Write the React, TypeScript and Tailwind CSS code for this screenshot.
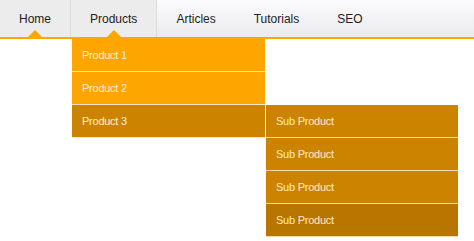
import React from 'react';

const navItems = [
  { label: 'Home', active: true },
  { label: 'Products', active: true, open: true },
  { label: 'Articles' },
  { label: 'Tutorials' },
  { label: 'SEO' },
];

const products = [
  { label: 'Product 1' },
  { label: 'Product 2' },
  { label: 'Product 3', hover: true },
];

const subProducts = ['Sub Product', 'Sub Product', 'Sub Product', 'Sub Product'];

function Dropdown() {
  return (
    <ul className="absolute left-px top-[39px] z-10 w-[193px]">
      {products.map((p) => (
        <li
          key={p.label}
          className={`relative flex h-[33px] items-center border-b border-[#fbe6c0] pl-[10px] text-[11px] tracking-[-0.25px] text-[#ffefd2] ${
            p.hover ? 'bg-[#cc8400]' : 'bg-[#ffa500]'
          }`}
        >
          {p.label}
          {p.hover && (
            <ul className="absolute left-full top-0 ml-px w-[192px]">
              {subProducts.map((s, i) => (
                <li
                  key={i}
                  className={`flex h-[33px] items-center border-b border-[#f5dcae] pl-[10px] text-[11px] tracking-[-0.25px] text-[#ffeac2] ${
                    i === subProducts.length - 1 ? 'bg-[#b87500]' : 'bg-[#cc8400]'
                  }`}
                >
                  {s}
                </li>
              ))}
            </ul>
          )}
        </li>
      ))}
    </ul>
  );
}

export default function App() {
  return (
    <div className="h-[241px] w-[474px] bg-white font-['Liberation_Sans',Arial,sans-serif]">
      <nav className="border-b-2 border-[#ffa500] bg-gradient-to-b from-[#fbfafc] to-[#ebeaed]">
        <ul className="flex h-[37px]">
          {navItems.map((item) => (
            <li
              key={item.label}
              className={`relative flex h-full items-center px-[19px] pt-px text-[12px] text-[#222] ${
                item.active ? 'border-r border-[#dcdcdc] bg-[#ececec]' : ''
              }`}
            >
              {item.label}
              {item.active && (
                <span className="absolute bottom-0 left-1/2 h-0 w-0 -translate-x-1/2 border-x-[7px] border-b-[7px] border-x-transparent border-b-[#ffa500]" />
              )}
              {item.open && <Dropdown />}
            </li>
          ))}
        </ul>
      </nav>
    </div>
  );
}
